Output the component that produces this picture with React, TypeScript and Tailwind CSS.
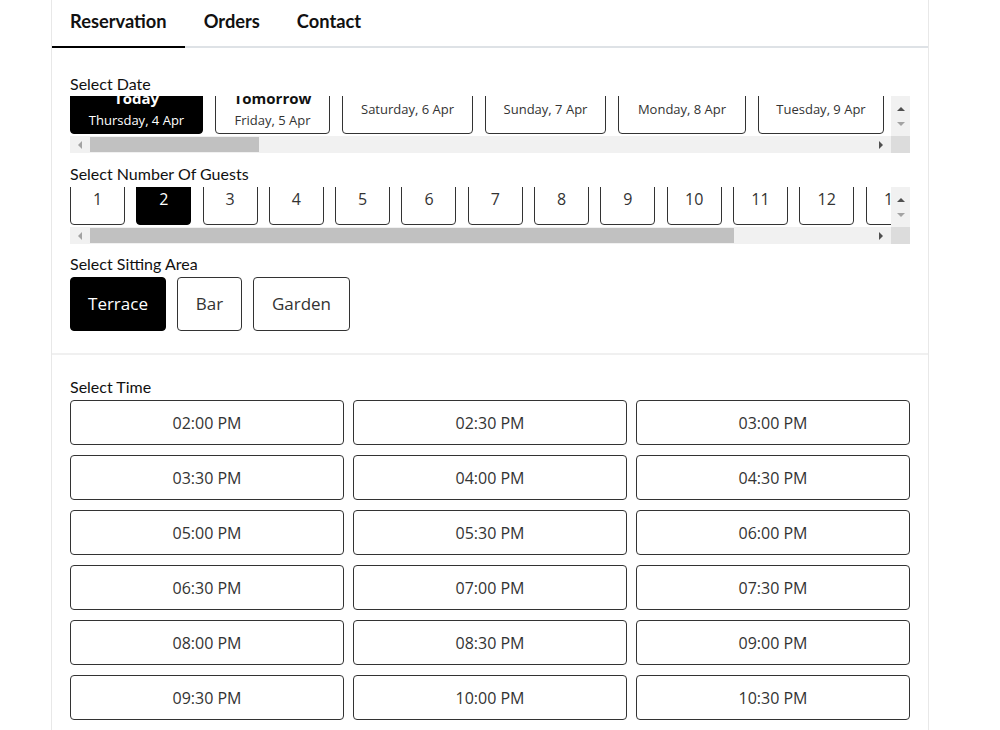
import React from "react";

const dates = [
  { top: "Today", sub: "Thursday, 4 Apr", w: "w-[133px]", active: true },
  { top: "Tomorrow", sub: "Friday, 5 Apr", w: "w-[115px]" },
  { sub: "Saturday, 6 Apr", w: "w-[131px]" },
  { sub: "Sunday, 7 Apr", w: "w-[121px]" },
  { sub: "Monday, 8 Apr", w: "w-[128px]" },
  { sub: "Tuesday, 9 Apr", w: "w-[126px]" },
  { sub: "Wednesday, 10 Apr", w: "w-[140px]" },
];

const guests = Array.from({ length: 16 }, (_, i) => i + 1);

const areas = [
  { name: "Terrace", w: "w-[96px]", active: true },
  { name: "Bar", w: "w-[65px]" },
  { name: "Garden", w: "w-[97px]" },
];

const times = [
  "02:00 PM", "02:30 PM", "03:00 PM",
  "03:30 PM", "04:00 PM", "04:30 PM",
  "05:00 PM", "05:30 PM", "06:00 PM",
  "06:30 PM", "07:00 PM", "07:30 PM",
  "08:00 PM", "08:30 PM", "09:00 PM",
  "09:30 PM", "10:00 PM", "10:30 PM",
  "11:00 PM", "11:30 PM",
];

const btnFont = { fontFamily: '"Open Sans", "Noto Sans", sans-serif' };

function Arrow({ dir, dark }: { dir: "up" | "down" | "left" | "right"; dark?: boolean }) {
  const fill = dark ? "#505050" : "#a3a3a3";
  const pts = {
    up: "0,4 4,0 8,4",
    down: "0,0 8,0 4,4",
    left: "4,0 4,8 0,4",
    right: "0,0 4,4 0,8",
  }[dir];
  const vert = dir === "up" || dir === "down";
  return (
    <svg width={vert ? 8 : 4} height={vert ? 4 : 8} viewBox={vert ? "0 0 8 4" : "0 0 4 8"}>
      <polygon points={pts} fill={fill} />
    </svg>
  );
}

// fake scroll area with classic scrollbars (content scrolled down a bit)
function Scroller({ children, thumb }: { children: React.ReactNode; thumb: string }) {
  return (
    <div className="grid grid-cols-[1fr_19px] grid-rows-[40px_17px]">
      <div className="overflow-hidden">{children}</div>
      <div className="bg-[#f1f1f1] flex flex-col items-center justify-center gap-[11px]">
        <Arrow dir="up" dark />
        <Arrow dir="down" />
      </div>
      <div className="bg-[#f1f1f1] flex items-center">
        <div className="w-[20px] flex justify-center">
          <Arrow dir="left" />
        </div>
        <div className={`h-[15px] bg-[#c1c1c1] ${thumb}`} />
        <div className="flex-1" />
        <div className="w-[20px] flex justify-center">
          <Arrow dir="right" dark />
        </div>
      </div>
      <div className="bg-[#dcdcdc]" />
    </div>
  );
}

function Label({ children, className = "" }: { children: React.ReactNode; className?: string }) {
  return (
    <div className={`h-[20px] text-[16px] leading-[20px] text-[#111] ${className}`}>{children}</div>
  );
}

export default function App() {
  return (
    <div className="min-h-screen bg-white" style={{ fontFamily: "Lato, sans-serif" }}>
      <div className="ml-[51px] w-[878px] border-x border-[#e8e8e8] min-h-screen">
        {/* Tabs */}
        <div className="flex border-b-2 border-[#dee2e6]">
          <div className="-mb-[2px] h-[48px] pb-[3px] px-[18px] flex items-center border-b-2 border-black text-[18.3px] font-bold text-[#111]">
            Reservation
          </div>
          <div className="h-[46px] pb-[2px] pl-[19px] pr-[18px] flex items-center text-[18.3px] font-bold text-[#111]">
            Orders
          </div>
          <div className="h-[46px] pb-[2px] pl-[19px] pr-[18px] flex items-center text-[18.3px] font-bold text-[#111]">
            Contact
          </div>
        </div>

        {/* Date / guests / area */}
        <div className="px-[18px] pt-[26px] pb-[22px] border-b-2 border-[#f0f0f0]">
          <Label>Select Date</Label>
          <div className="mt-[2px]">
            <Scroller thumb="w-[169px]">
              <div className="flex gap-[12px] -mt-[12px]" style={btnFont}>
                {dates.map((d) => (
                  <div
                    key={d.sub}
                    className={`shrink-0 h-[50px] rounded-[4px] border flex flex-col items-center justify-center ${d.w} ${
                      d.active ? "bg-black border-black text-white" : "bg-white border-[#333] text-[#333]"
                    }`}
                  >
                    {d.top && (
                      <div className={`text-[15px] leading-[22px] font-bold ${d.active ? "text-white" : "text-[#111]"}`}>
                        {d.top}
                      </div>
                    )}
                    <div className="text-[13px] leading-[22px]">{d.sub}</div>
                  </div>
                ))}
              </div>
            </Scroller>
          </div>

          <Label className="mt-[11px]">Select Number Of Guests</Label>
          <div className="mt-[3px]">
            <Scroller thumb="w-[644px]">
              <div className="flex gap-[11.3px] -mt-[14px]" style={btnFont}>
                {guests.map((g) => (
                  <div
                    key={g}
                    className={`shrink-0 w-[55px] h-[52px] rounded-[4px] border flex items-center justify-center text-[16px] ${
                      g === 2 ? "bg-black border-black text-white" : "bg-white border-[#333] text-[#333]"
                    }`}
                  >
                    {g}
                  </div>
                ))}
              </div>
            </Scroller>
          </div>

          <Label className="mt-[10px]">Select Sitting Area</Label>
          <div className="mt-[3px] flex gap-[11px]" style={btnFont}>
            {areas.map((a) => (
              <div
                key={a.name}
                className={`h-[54px] rounded-[4px] border flex items-center justify-center text-[17px] ${a.w} ${
                  a.active ? "bg-black border-black text-white font-medium" : "bg-white border-[#333] text-[#333]"
                }`}
              >
                {a.name}
              </div>
            ))}
          </div>
        </div>

        {/* Time */}
        <div className="px-[18px] pt-[22px] pb-[20px]">
          <Label>Select Time</Label>
          <div className="mt-[3px] grid grid-cols-3 gap-x-[9px] gap-y-[10px]" style={btnFont}>
            {times.map((t) => (
              <div
                key={t}
                className="h-[45px] rounded-[4px] border border-[#333] flex items-center justify-center text-[16px] text-[#333]"
              >
                {t}
              </div>
            ))}
          </div>
        </div>
      </div>
    </div>
  );
}
